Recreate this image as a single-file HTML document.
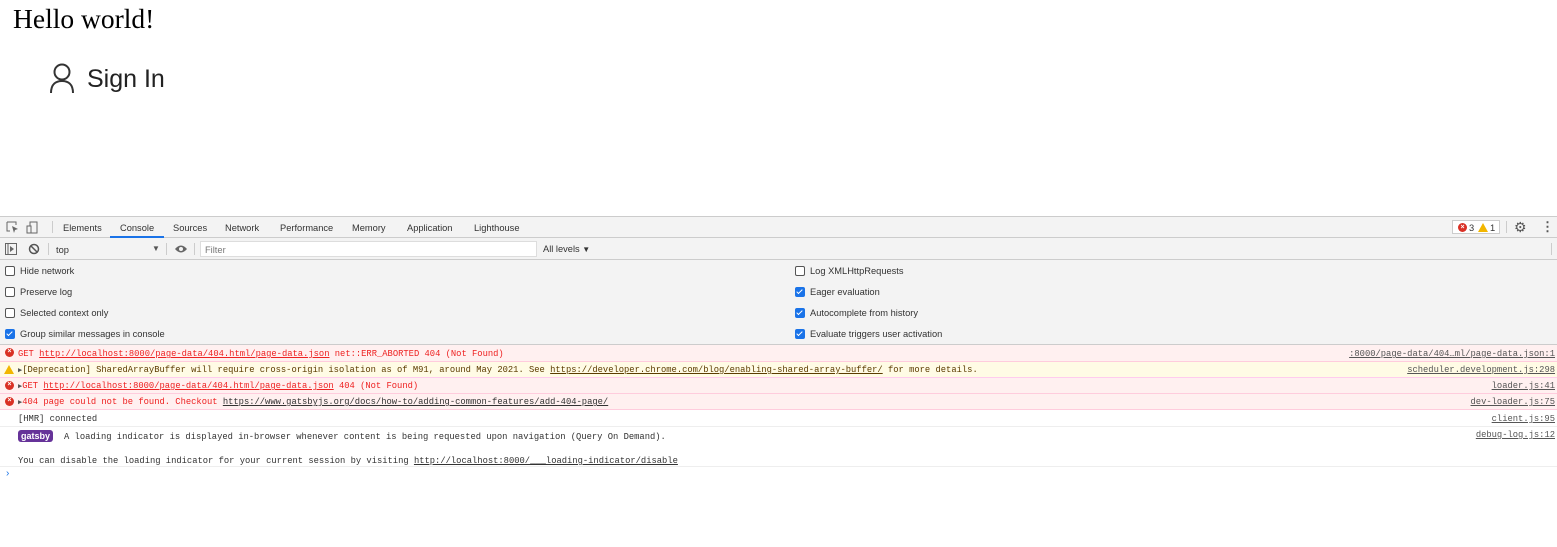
<!DOCTYPE html>
<html><head><style>
body{margin:0;width:1557px;height:547px;position:relative;overflow:hidden;background:#fff;font-family:"Liberation Sans",sans-serif}
.a{position:absolute}
.ui{font-size:9.3px;color:#333}
.m{font-family:"Liberation Mono",monospace;font-size:8.8px;white-space:nowrap}
.row{position:absolute;left:0;width:1557px}
.u{text-decoration:underline}
.cb{position:absolute;width:8px;height:8px;border:1px solid #555;border-radius:2px;background:#fff}
.cb.on{background:#1a73e8;border-color:#1a73e8}
.cb.on:after{content:"";position:absolute;left:2px;top:0px;width:2px;height:5px;border:solid #fff;border-width:0 1.5px 1.5px 0;transform:rotate(45deg)}
.ic{position:absolute;width:9px;height:9px;border-radius:50%;background:#d93025;color:#fff;font-size:7px;line-height:9px;text-align:center;font-weight:bold}
.r{position:absolute;right:2px;color:#555}
</style></head><body>
<div class="a" style="left:13px;top:3px;font-family:'Liberation Serif',serif;font-size:27.5px;color:#000">Hello world!</div>
<svg class="a" style="left:49px;top:63px" width="26" height="30" viewBox="0 0 26 30"><circle cx="13" cy="9" r="7.5" fill="none" stroke="#333" stroke-width="2"/><path d="M2 30 C2 21 7 18 13 18 C19 18 24 21 24 30" fill="none" stroke="#333" stroke-width="2"/></svg>
<div class="a" style="left:87px;top:65px;font-size:25px;color:#222">Sign In</div>

<div class="row" style="top:216px;height:22px;background:#f3f3f3;border-top:1px solid #ccc;border-bottom:1px solid #ccc;box-sizing:border-box"></div>
<svg class="a" style="left:6px;top:221px" width="14" height="13"><path d="M1 1h9v3M1 1v9h3" fill="none" stroke="#666"/><path d="M6 5l6 3-3 1-1 3z" fill="#666"/></svg>
<svg class="a" style="left:26px;top:221px" width="14" height="13"><rect x="4" y="1" width="7" height="11" fill="none" stroke="#666"/><rect x="1" y="5" width="4" height="7" fill="#f3f3f3" stroke="#666"/></svg>
<div class="a" style="left:52px;top:221px;width:1px;height:12px;background:#ccc"></div>
<div class="a ui" style="left:63px;top:223px">Elements</div>
<div class="a ui" style="left:120px;top:223px">Console</div>
<div class="a" style="left:110px;top:236px;width:54px;height:2px;background:#1a73e8"></div>
<div class="a ui" style="left:173px;top:223px">Sources</div>
<div class="a ui" style="left:225px;top:223px">Network</div>
<div class="a ui" style="left:280px;top:223px">Performance</div>
<div class="a ui" style="left:352px;top:223px">Memory</div>
<div class="a ui" style="left:407px;top:223px">Application</div>
<div class="a ui" style="left:474px;top:223px">Lighthouse</div>
<div class="a" style="left:1452px;top:220px;width:48px;height:14px;border:1px solid #ccc;background:#fff;box-sizing:border-box"></div>
<div class="ic" style="left:1458px;top:223px;">×</div>
<div class="a ui" style="left:1469px;top:223px">3</div>
<svg class="a" style="left:1478px;top:223px" width="10" height="9"><path d="M5 0L10 9H0z" fill="#f2b600"/></svg>
<div class="a ui" style="left:1490px;top:223px">1</div>
<div class="a" style="left:1506px;top:221px;width:1px;height:12px;background:#ccc"></div>
<div class="a" style="left:1514px;top:219px;font-size:14px;color:#555">⚙</div>
<div class="a" style="left:1541px;top:219px;font-size:13px;color:#555;font-weight:bold">⋮</div>

<div class="row" style="top:238px;height:22px;background:#f3f3f3;border-bottom:1px solid #ccc;box-sizing:border-box"></div>
<svg class="a" style="left:5px;top:243px" width="12" height="12"><rect x=".5" y=".5" width="11" height="11" fill="none" stroke="#666"/><path d="M3 1v10" stroke="#666"/><path d="M5 3l4 3-4 3z" fill="#666"/></svg>
<svg class="a" style="left:28px;top:243px" width="12" height="12"><circle cx="6" cy="6" r="4.5" fill="none" stroke="#555" stroke-width="1.5"/><path d="M3 3l6 6" stroke="#555" stroke-width="1.5"/></svg>
<div class="a" style="left:48px;top:243px;width:1px;height:12px;background:#ccc"></div>
<div class="a ui" style="left:56px;top:245px">top</div>
<div class="a ui" style="left:152px;top:244px;font-size:8px;color:#555">▼</div>
<div class="a" style="left:166px;top:243px;width:1px;height:12px;background:#ccc"></div>
<svg class="a" style="left:174px;top:244px" width="14" height="10"><path d="M1 5Q7 -2 13 5Q7 12 1 5z" fill="#666"/><circle cx="7" cy="5" r="2" fill="#f3f3f3"/></svg>
<div class="a" style="left:194px;top:243px;width:1px;height:12px;background:#ccc"></div>
<div class="a" style="left:200px;top:241px;width:337px;height:16px;background:#fff;border:1px solid #ddd;box-sizing:border-box"></div>
<div class="a ui" style="left:205px;top:245px;color:#777">Filter</div>
<div class="a ui" style="left:543px;top:244px">All levels <span style="font-size:8px">▼</span></div>
<div class="a" style="left:1551px;top:243px;width:1px;height:12px;background:#ccc"></div>

<div class="row" style="top:260px;height:85px;background:#f3f3f3;border-bottom:1px solid #ccc;box-sizing:border-box"></div>
<div class="cb" style="left:5px;top:266px"></div><div class="a ui" style="left:20px;top:266px">Hide network</div>
<div class="cb" style="left:5px;top:287px"></div><div class="a ui" style="left:20px;top:287px">Preserve log</div>
<div class="cb" style="left:5px;top:308px"></div><div class="a ui" style="left:20px;top:308px">Selected context only</div>
<div class="cb on" style="left:5px;top:329px"></div><div class="a ui" style="left:20px;top:329px">Group similar messages in console</div>
<div class="cb" style="left:795px;top:266px"></div><div class="a ui" style="left:810px;top:266px">Log XMLHttpRequests</div>
<div class="cb on" style="left:795px;top:287px"></div><div class="a ui" style="left:810px;top:287px">Eager evaluation</div>
<div class="cb on" style="left:795px;top:308px"></div><div class="a ui" style="left:810px;top:308px">Autocomplete from history</div>
<div class="cb on" style="left:795px;top:329px"></div><div class="a ui" style="left:810px;top:329px">Evaluate triggers user activation</div>

<div class="row m" style="top:345px;height:17px;background:#fff0f0;border-bottom:1px solid #fcd;box-sizing:border-box;color:#e22">
<div class="ic" style="left:5px;top:3px">×</div>
<span class="a" style="left:18px;top:4px">GET <span class="u">http://localhost:8000/page-data/404.html/page-data.json</span> net::ERR_ABORTED 404 (Not Found)</span>
<span class="r u" style="top:4px">:8000/page-data/404…ml/page-data.json:1</span></div>
<div class="row m" style="top:362px;height:16px;background:#fffbe5;border-bottom:1px solid #fce;box-sizing:border-box;color:#5c3c00">
<svg class="a" style="left:4px;top:3px" width="10" height="9"><path d="M5 0L10 9H0z" fill="#f2b600"/></svg>
<span class="a" style="left:18px;top:3px"><span style="font-size:7px;color:#555">▶</span>[Deprecation] SharedArrayBuffer will require cross-origin isolation as of M91, around May 2021. See <span class="u">https://developer.chrome.com/blog/enabling-shared-array-buffer/</span> for more details.</span>
<span class="r u" style="top:3px">scheduler.development.js:298</span></div>
<div class="row m" style="top:378px;height:16px;background:#fff0f0;border-bottom:1px solid #fcd;box-sizing:border-box;color:#e22">
<div class="ic" style="left:5px;top:3px">×</div>
<span class="a" style="left:18px;top:3px"><span style="font-size:7px;color:#555">▶</span>GET <span class="u">http://localhost:8000/page-data/404.html/page-data.json</span> 404 (Not Found)</span>
<span class="r u" style="top:3px">loader.js:41</span></div>
<div class="row m" style="top:394px;height:16px;background:#fff0f0;border-bottom:1px solid #fcd;box-sizing:border-box;color:#e22">
<div class="ic" style="left:5px;top:3px">×</div>
<span class="a" style="left:18px;top:3px"><span style="font-size:7px;color:#555">▶</span>404 page could not be found. Checkout <span class="u" style="color:#333">https://www.gatsbyjs.org/docs/how-to/adding-common-features/add-404-page/</span></span>
<span class="r u" style="top:3px">dev-loader.js:75</span></div>
<div class="row m" style="top:410px;height:17px;border-bottom:1px solid #eee;box-sizing:border-box;color:#333">
<span class="a" style="left:18px;top:4px">[HMR] connected</span>
<span class="r u" style="top:4px">client.js:95</span></div>
<div class="row m" style="top:427px;height:40px;border-bottom:1px solid #eee;box-sizing:border-box;color:#333">
<span class="a" style="left:18px;top:3px;background:#663399;color:#fff;border-radius:3px;padding:1px 3px;font-family:'Liberation Sans',sans-serif;font-weight:bold;font-size:9px">gatsby</span>
<span class="a" style="left:64px;top:5px">A loading indicator is displayed in-browser whenever content is being requested upon navigation (Query On Demand).</span>
<span class="a" style="left:18px;top:29px">You can disable the loading indicator for your current session by visiting <span class="u">http://localhost:8000/___loading-indicator/disable</span></span>
<span class="r u" style="top:3px">debug-log.js:12</span></div>
<div class="a" style="left:6px;top:468px;color:#1a73e8;font-size:10px">›</div>
</body></html>
